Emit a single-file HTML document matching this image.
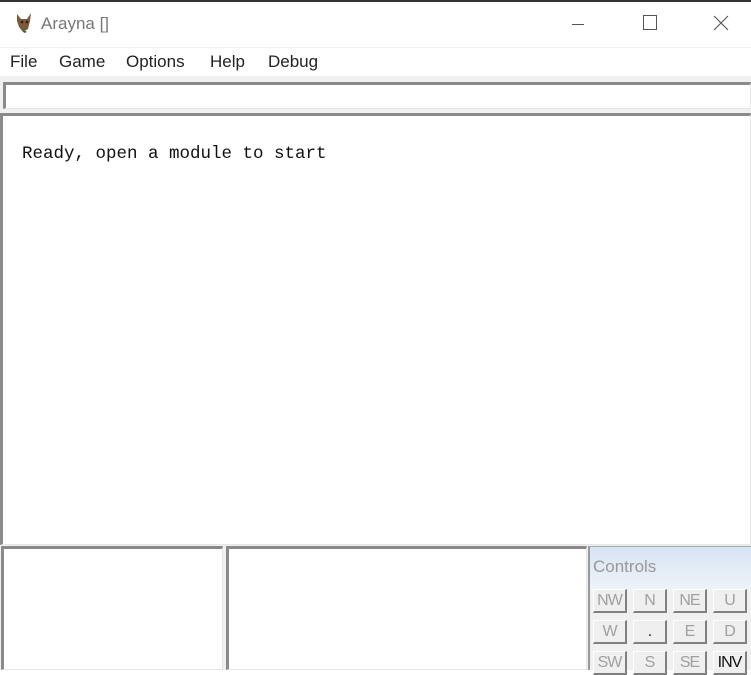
<!DOCTYPE html>
<html><head><style>
body{margin:0;width:751px;height:670px;overflow:hidden;background:#fff;font-family:"Liberation Sans",sans-serif;position:relative}
.a{position:absolute;box-sizing:border-box}
.sunk{border-top:3px solid #8a8a8a;border-left:3px solid #8a8a8a;border-right:1px solid #e6e6e6;border-bottom:1px solid #e6e6e6;background:#fff}
.b{position:absolute;width:34px;height:24px;box-sizing:border-box;background:#efefef;border-top:1px solid #fff;border-left:1px solid #fff;border-right:2px solid #808080;border-bottom:2px solid #808080;color:#a0a0a0;font-size:16px;text-align:center;line-height:21px;letter-spacing:-1px}
</style></head><body>
<div class="a" style="left:0;top:0;width:751px;height:2px;background:#333"></div>
<div class="a" style="left:14px;top:12px;width:20px;height:22px">
<svg width="20" height="22" viewBox="0 0 20 22"><path d="M3 2 L7 7 L13 7 L17 1 L16 9 L14 17 L9 20 L5 15 L3 9Z" fill="#7a5a3a"/><circle cx="8" cy="10" r="1.3" fill="#222"/><circle cx="13" cy="10" r="1.3" fill="#222"/><path d="M8 17 L13 20 L10 21Z" fill="#3a6a2a"/></svg></div>
<div class="a" style="left:41px;top:14px;font-size:17px;color:#777">Arayna []</div>
<div class="a" style="left:572px;top:24px;width:12px;height:1px;background:#555"></div>
<div class="a" style="left:643px;top:15px;width:14px;height:15px;border:1px solid #555"></div>
<svg class="a" style="left:713px;top:15px" width="16" height="16"><path d="M1 1L15 15M15 1L1 15" stroke="#555" stroke-width="1.1"/></svg>
<div class="a" style="left:0;top:47px;width:751px;height:1px;background:#f0f0f0"></div>
<div class="a" style="left:10px;top:52px;font-size:17px;color:#222">File</div>
<div class="a" style="left:59px;top:52px;font-size:17px;color:#222">Game</div>
<div class="a" style="left:126px;top:52px;font-size:17px;color:#222">Options</div>
<div class="a" style="left:210px;top:52px;font-size:17px;color:#222">Help</div>
<div class="a" style="left:268px;top:52px;font-size:17px;color:#222">Debug</div>
<div class="a" style="left:0;top:76px;width:751px;height:470px;background:#f0f0f0"></div>
<div class="a sunk" style="left:3px;top:82px;width:748px;height:27px"></div>
<div class="a sunk" style="left:0;top:113px;width:751px;height:432px"></div>
<div class="a" style="left:22px;top:144px;font-family:'Liberation Mono',monospace;font-size:17.5px;color:#111">Ready, open a module to start</div>
<div class="a" style="left:0;top:545px;width:751px;height:125px;background:#f0f0f0"></div>
<div class="a sunk" style="left:1px;top:546px;width:222px;height:124px"></div>
<div class="a sunk" style="left:226px;top:546px;width:361px;height:124px"></div>
<div class="a" style="left:588px;top:546px;width:163px;height:124px;border-left:2px solid #999;border-top:1px solid #aaa;background:linear-gradient(#d7e4f2,#eef3f9 35%,#f0f0f0 40%)"></div>
<div class="a" style="left:593px;top:557px;font-size:17px;color:#999">Controls</div>
<div class="b" style="left:593px;top:589px">NW</div>
<div class="b" style="left:633px;top:589px">N</div>
<div class="b" style="left:673px;top:589px">NE</div>
<div class="b" style="left:713px;top:589px">U</div>
<div class="b" style="left:593px;top:620px">W</div>
<div class="b" style="left:633px;top:620px;color:#222">.</div>
<div class="b" style="left:673px;top:620px">E</div>
<div class="b" style="left:713px;top:620px">D</div>
<div class="b" style="left:593px;top:651px">SW</div>
<div class="b" style="left:633px;top:651px">S</div>
<div class="b" style="left:673px;top:651px">SE</div>
<div class="b" style="left:713px;top:651px;color:#111">INV</div>
</body></html>
